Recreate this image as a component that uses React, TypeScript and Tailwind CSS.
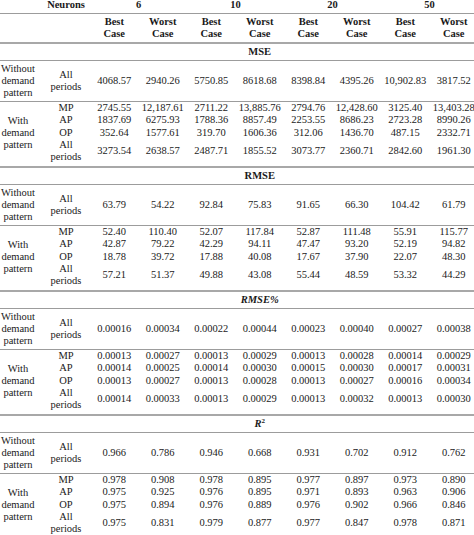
import React from "react";

type Sec = {
  label: React.ReactNode;
  without: string[];
  mp: string[];
  ap: string[];
  op: string[];
  all: string[];
};

const sections: Sec[] = [
  {
    label: <span className="font-bold">MSE</span>,
    without: ["4068.57", "2940.26", "5750.85", "8618.68", "8398.84", "4395.26", "10,902.83", "3817.52"],
    mp: ["2745.55", "12,187.61", "2711.22", "13,885.76", "2794.76", "12,428.60", "3125.40", "13,403.28"],
    ap: ["1837.69", "6275.93", "1788.36", "8857.49", "2253.55", "8686.23", "2723.28", "8990.26"],
    op: ["352.64", "1577.61", "319.70", "1606.36", "312.06", "1436.70", "487.15", "2332.71"],
    all: ["3273.54", "2638.57", "2487.71", "1855.52", "3073.77", "2360.71", "2842.60", "1961.30"],
  },
  {
    label: <span className="font-bold">RMSE</span>,
    without: ["63.79", "54.22", "92.84", "75.83", "91.65", "66.30", "104.42", "61.79"],
    mp: ["52.40", "110.40", "52.07", "117.84", "52.87", "111.48", "55.91", "115.77"],
    ap: ["42.87", "79.22", "42.29", "94.11", "47.47", "93.20", "52.19", "94.82"],
    op: ["18.78", "39.72", "17.88", "40.08", "17.67", "37.90", "22.07", "48.30"],
    all: ["57.21", "51.37", "49.88", "43.08", "55.44", "48.59", "53.32", "44.29"],
  },
  {
    label: <span className="font-bold italic">RMSE%</span>,
    without: ["0.00016", "0.00034", "0.00022", "0.00044", "0.00023", "0.00040", "0.00027", "0.00038"],
    mp: ["0.00013", "0.00027", "0.00013", "0.00029", "0.00013", "0.00028", "0.00014", "0.00029"],
    ap: ["0.00014", "0.00025", "0.00014", "0.00030", "0.00015", "0.00030", "0.00017", "0.00031"],
    op: ["0.00013", "0.00027", "0.00013", "0.00028", "0.00013", "0.00027", "0.00016", "0.00034"],
    all: ["0.00014", "0.00033", "0.00013", "0.00029", "0.00013", "0.00032", "0.00013", "0.00030"],
  },
  {
    label: (
      <span className="font-bold">
        <span className="italic">R</span>
        <span className="relative top-[-4px] text-[7px]">2</span>
      </span>
    ),
    without: ["0.966", "0.786", "0.946", "0.668", "0.931", "0.702", "0.912", "0.762"],
    mp: ["0.978", "0.908", "0.978", "0.895", "0.977", "0.897", "0.973", "0.890"],
    ap: ["0.975", "0.925", "0.976", "0.895", "0.971", "0.893", "0.963", "0.906"],
    op: ["0.975", "0.894", "0.976", "0.889", "0.976", "0.902", "0.966", "0.846"],
    all: ["0.975", "0.831", "0.979", "0.877", "0.977", "0.847", "0.978", "0.871"],
  },
];

function Thin() {
  return <div className="h-px bg-[#9c9c9c]" />;
}
function Thick() {
  return <div className="h-[2px] bg-[#a8a8a8]" />;
}

function Section({ s }: { s: Sec }) {
  return (
    <div>
      <div className="flex h-[16px] items-center">
        <div className="w-[241.5px] shrink-0" />
        <div className="w-[48.5px] shrink-0 whitespace-nowrap text-center">{s.label}</div>
      </div>
      <Thin />
      <div className="flex h-[40px] items-center leading-[12.25px]">
        <div className="w-[48px] shrink-0 text-center">
          Without
          <br />
          demand
          <br />
          pattern
        </div>
        <div className="w-[48px] shrink-0 text-center">
          All
          <br />
          periods
        </div>
        {s.without.map((v, i) => (
          <div key={i} className="w-[48.5px] shrink-0 whitespace-nowrap text-center">
            {v}
          </div>
        ))}
      </div>
      <Thin />
      <div className="flex h-[64px] leading-[12.25px]">
        <div className="flex w-[48px] shrink-0 items-center justify-center pb-[2px] text-center">
          <div>
            With
            <br />
            demand
            <br />
            pattern
          </div>
        </div>
        <div className="w-[48px] shrink-0 text-center">
          MP
          <br />
          AP
          <br />
          OP
          <br />
          All
          <br />
          periods
        </div>
        {s.mp.map((_, i) => (
          <div key={i} className="flex w-[48.5px] shrink-0 flex-col whitespace-nowrap text-center">
            <div className="h-[12.25px]">{s.mp[i]}</div>
            <div className="h-[12.25px]">{s.ap[i]}</div>
            <div className="h-[12.25px]">{s.op[i]}</div>
            <div className="flex h-[24.5px] items-center justify-center">{s.all[i]}</div>
          </div>
        ))}
      </div>
      <Thick />
    </div>
  );
}

export default function App() {
  const groups = ["6", "10", "20", "50"];
  return (
    <div className="h-[535px] w-[474px] overflow-hidden bg-white font-serif text-[10.5px] text-[#1a1a1a]">
      <div className="ml-[-6px] w-[484px] font-['Liberation_Serif']">
        <div className="flex h-[13px] items-start font-bold leading-[10px]">
          <div className="w-[48px] shrink-0" />
          <div className="w-[48px] shrink-0 text-center">Neurons</div>
          {groups.map((g) => (
            <div key={g} className="w-[97px] shrink-0 text-center">
              {g}
            </div>
          ))}
        </div>
        <Thin />
        <div className="flex h-[28px] items-center font-bold leading-[12px]">
          <div className="w-[96px] shrink-0" />
          {groups.map((g) => (
            <React.Fragment key={g}>
              <div className="w-[48.5px] shrink-0 text-center">
                Best
                <br />
                Case
              </div>
              <div className="w-[48.5px] shrink-0 text-center">
                Worst
                <br />
                Case
              </div>
            </React.Fragment>
          ))}
        </div>
        <Thick />
        {sections.map((s, i) => (
          <Section key={i} s={s} />
        ))}
      </div>
    </div>
  );
}
